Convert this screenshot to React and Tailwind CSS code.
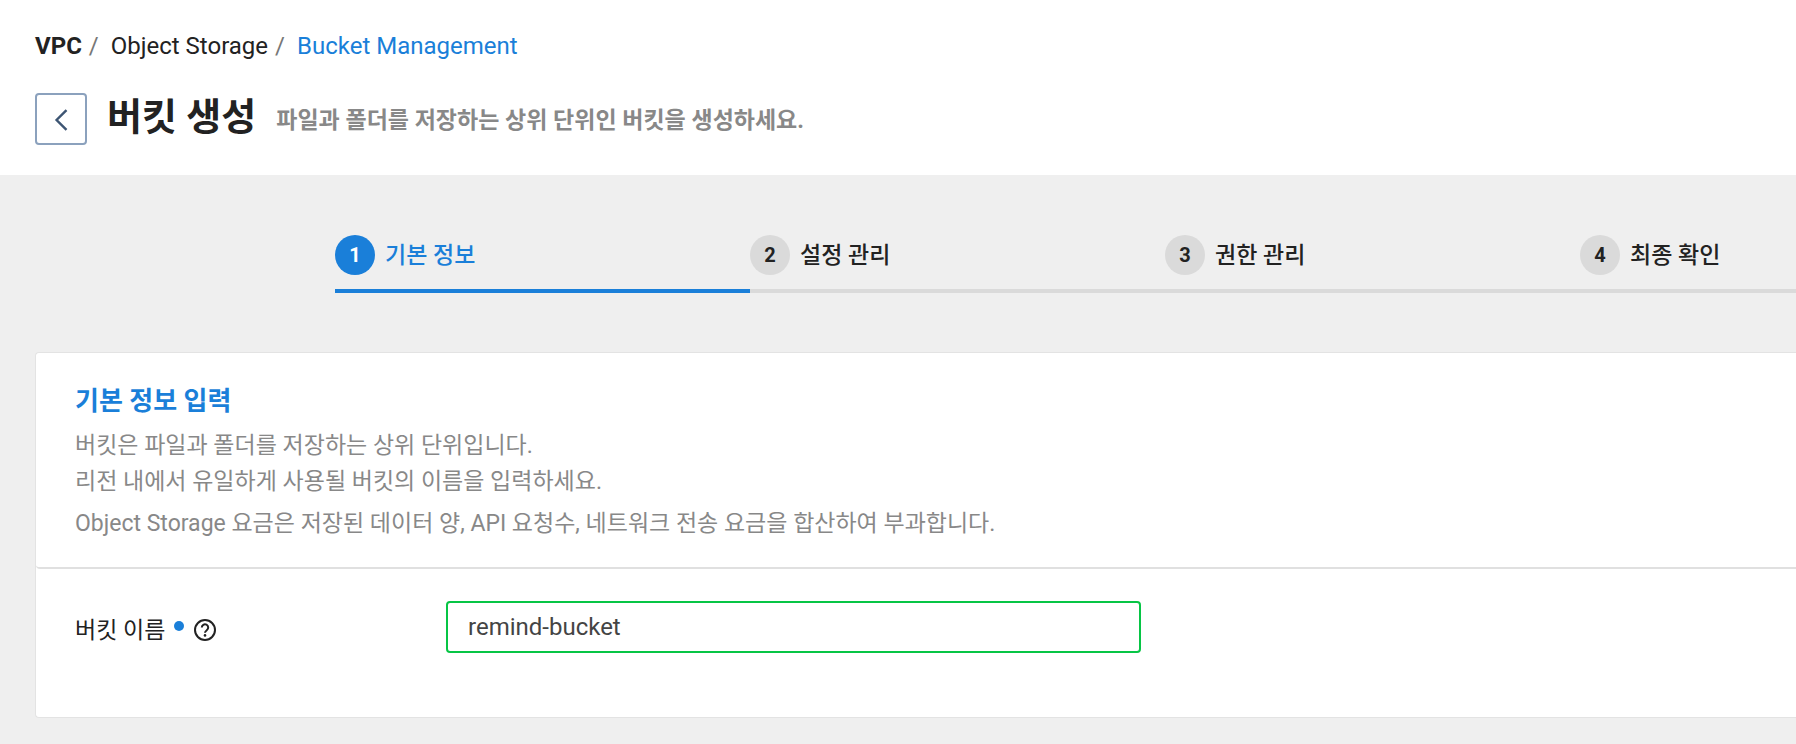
import React, { useState } from 'react';

const steps = ['기본 정보', '설정 관리', '권한 관리', '최종 확인'];

const Breadcrumb = () => (
    <nav aria-label="breadcrumb" className="flex items-center text-2xl text-[#222222]">
        <a href="#vpc" className="font-bold">VPC</a>
        <span className="ml-[7px] mr-3 text-[#777777]">/</span>
        <a href="#object-storage">Object Storage</a>
        <span className="ml-[7px] mr-3 text-[#777777]">/</span>
        <a href="#bucket" className="text-[#1a7fd9]">Bucket Management</a>
    </nav>
);

const PageHeader = () => (
    <header className="bg-white px-[35px] pt-[30px] pb-[30px]">
        <Breadcrumb />
        <div className="mt-[31px] flex items-center">
            <button type="button" aria-label="뒤로" className="flex size-[52px] shrink-0 items-center justify-center rounded border-2 border-[#8ba1bd] pt-[2px]">
                <svg width="14" height="22" viewBox="0 0 14 22" fill="none" stroke="#3d5573" strokeWidth="2.4">
                    <path d="M12.5 1.2 2.6 11l9.9 9.8" />
                </svg>
            </button>
            <h1 className="ml-5 pb-1 text-[38px] leading-[48px] font-bold text-[#222222]">버킷 생성</h1>
            <p className="ml-5 pt-1 text-[23px] font-bold text-[#888888]">파일과 폴더를 저장하는 상위 단위인 버킷을 생성하세요.</p>
        </div>
    </header>
);

// Wizard progress, the active step is drawn in blue
const StepBar = ({ current }) => (
    <ol className="flex overflow-hidden pl-[335px]">
        {steps.map((label, i) => (
            <li
                key={label}
                className={`flex w-[415px] shrink-0 items-center border-b-4 pb-[14px] ${i === current ? 'border-[#1a7fd9]' : 'border-[#dadada]'}`}
            >
                <span className={`flex size-10 items-center justify-center rounded-full text-xl font-bold ${i === current ? 'bg-[#1a7fd9] text-white' : 'bg-[#dadada] text-[#222222]'}`}>
                    {i + 1}
                </span>
                <span className={`ml-[10px] pt-[2px] text-[23px] leading-9 font-medium ${i === current ? 'text-[#1a7fd9]' : 'text-[#222222]'}`}>{label}</span>
            </li>
        ))}
    </ol>
);

const BucketForm = () => {
    const [name, setName] = useState('remind-bucket');

    return (
        <section className="ml-[35px] rounded-l border border-r-0 border-[#e3e3e3] bg-white">
            <div className="rounded-bl border-b-2 border-[#e0e0e0] px-[39px] pt-[30px] pb-[25px] text-[23px] leading-9 text-[#888888]">
                <h2 className="mb-[9px] text-[26px] leading-9 font-bold text-[#1a7fd9]">기본 정보 입력</h2>
                <p>버킷은 파일과 폴더를 저장하는 상위 단위입니다.</p>
                <p>리전 내에서 유일하게 사용될 버킷의 이름을 입력하세요.</p>
                <p className="mt-[6px]">Object Storage 요금은 저장된 데이터 양, API 요청수, 네트워크 전송 요금을 합산하여 부과합니다.</p>
            </div>
            <div className="flex items-center px-[39px] pt-8 pb-16">
                <div className="flex w-[371px] shrink-0 items-center pt-[6px]">
                    <label htmlFor="bucket-name" className="pt-[2px] text-[23px] text-[#222222]">버킷 이름</label>
                    <span className="mb-2 ml-[9px] size-[10px] rounded-full bg-[#1a7fd9]" />
                    <button type="button" aria-label="도움말" className="ml-[10px]">
                        <svg width="22" height="22" viewBox="0 0 22 22" fill="none" stroke="#222222" strokeWidth="2">
                            <circle cx="11" cy="11" r="10" />
                            <path d="M7.8 8.6a3.2 3.2 0 1 1 5 2.6c-1.1.8-1.8 1.3-1.8 2.6" />
                            <circle cx="11" cy="16.4" r="1.3" fill="#222222" stroke="none" />
                        </svg>
                    </button>
                </div>
                <input
                    id="bucket-name"
                    type="text"
                    value={name}
                    onChange={(e) => setName(e.target.value)}
                    className="h-[52px] w-full max-w-[695px] rounded border-2 border-[#07c545] px-5 text-2xl text-[#444444] outline-none"
                />
            </div>
        </section>
    );
};

export default function App() {
    return (
        <div className="min-h-screen bg-[#efefef] font-[Roboto,'Noto_Sans_CJK_KR',sans-serif]">
            <PageHeader />
            <main className="pt-[60px] pb-6">
                <StepBar current={0} />
                <div className="mt-[59px]">
                    <BucketForm />
                </div>
            </main>
        </div>
    );
}
